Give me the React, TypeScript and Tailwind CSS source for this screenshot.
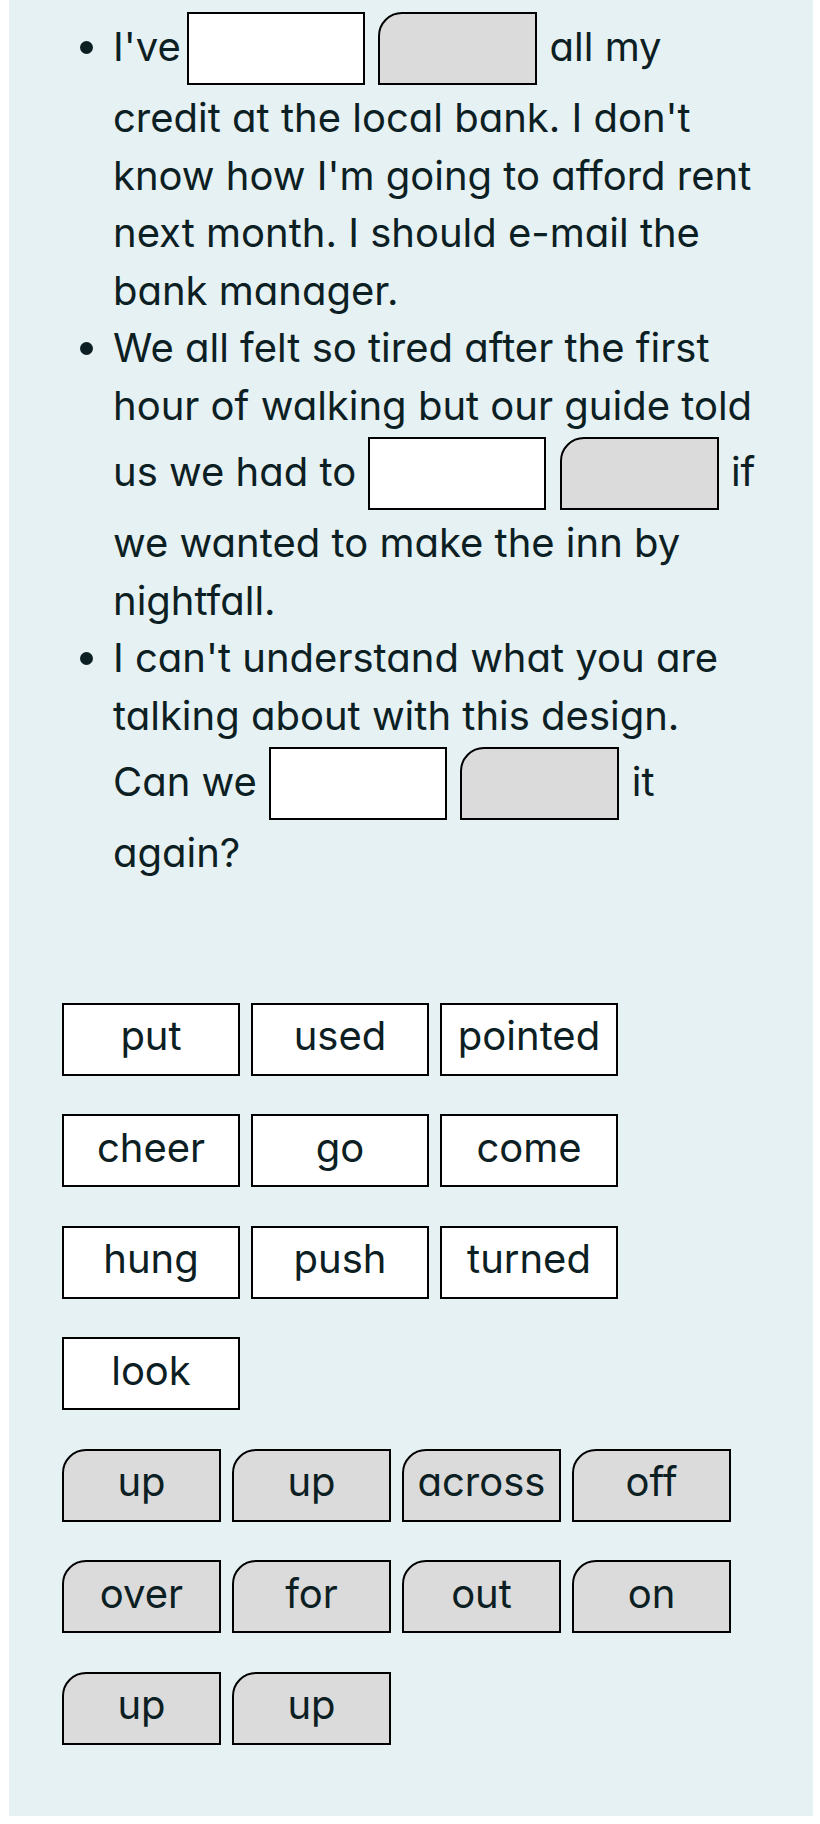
import React from "react";

const font =
  "[font-family:Inter,'Noto_Sans',sans-serif] [font-feature-settings:'cv11'] text-[40px] text-[#0c2023]";

// Empty answer slot for the verb (square corners)
function VerbSlot({ className = "ml-[1px]" }: { className?: string }) {
  return (
    <span
      className={`inline-block h-[73px] w-[178px] mt-[3px] mb-[4px] align-[-28px] border-2 border-black bg-white mr-[1px] ${className}`}
    />
  );
}

// Empty answer slot for the particle (rounded top-left corner)
function ParticleSlot() {
  return (
    <span className="inline-block h-[73px] w-[159px] mt-[3px] mb-[4px] align-[-28px] border-2 border-black bg-[#dbdbdb] rounded-tl-[24px] mx-[1px]" />
  );
}

const verbs = ["put", "used", "pointed", "cheer", "go", "come", "hung", "push", "turned", "look"];
const particles = ["up", "up", "across", "off", "over", "for", "out", "on", "up", "up"];

export default function App() {
  return (
    <div className={`min-h-screen bg-white ${font}`}>
      <div className="ml-[9px] w-[804px] bg-[#e6f1f3] px-[53px] pt-[9px] pb-[71px]">
        <ul className="list-disc pl-[51px] leading-[57.5px] whitespace-nowrap">
          <li>
            I've <VerbSlot className="ml-[-5px]" /> <ParticleSlot /> all my
            <br />
            credit at the local bank. I don't
            <br />
            know how I'm going to afford rent
            <br />
            next month. I should e-mail the
            <br />
            bank manager.
          </li>
          <li>
            We all felt so tired after the first
            <br />
            hour of walking but our guide told
            <br />
            us we had to <VerbSlot /> <ParticleSlot /> if
            <br />
            we wanted to make the inn by
            <br />
            nightfall.
          </li>
          <li>
            I can't understand what you are
            <br />
            talking about with this design.
            <br />
            Can we <VerbSlot /> <ParticleSlot /> it
            <br />
            again?
          </li>
        </ul>

        <div className="mt-[121px] flex flex-col gap-y-[38.5px]">
          <div className="flex flex-wrap gap-x-[11px] gap-y-[38.5px]">
            {verbs.map((w, i) => (
              <div
                key={i}
                className="flex h-[73px] w-[178px] items-center justify-center border-2 border-black bg-white pb-[6px] leading-none"
              >
                {w}
              </div>
            ))}
          </div>
          <div className="flex flex-wrap gap-x-[11px] gap-y-[38.5px]">
            {particles.map((w, i) => (
              <div
                key={i}
                className="flex h-[73px] w-[159px] items-center justify-center rounded-tl-[24px] border-2 border-black bg-[#dbdbdb] pb-[6px] leading-none"
              >
                {w}
              </div>
            ))}
          </div>
        </div>
      </div>
    </div>
  );
}
